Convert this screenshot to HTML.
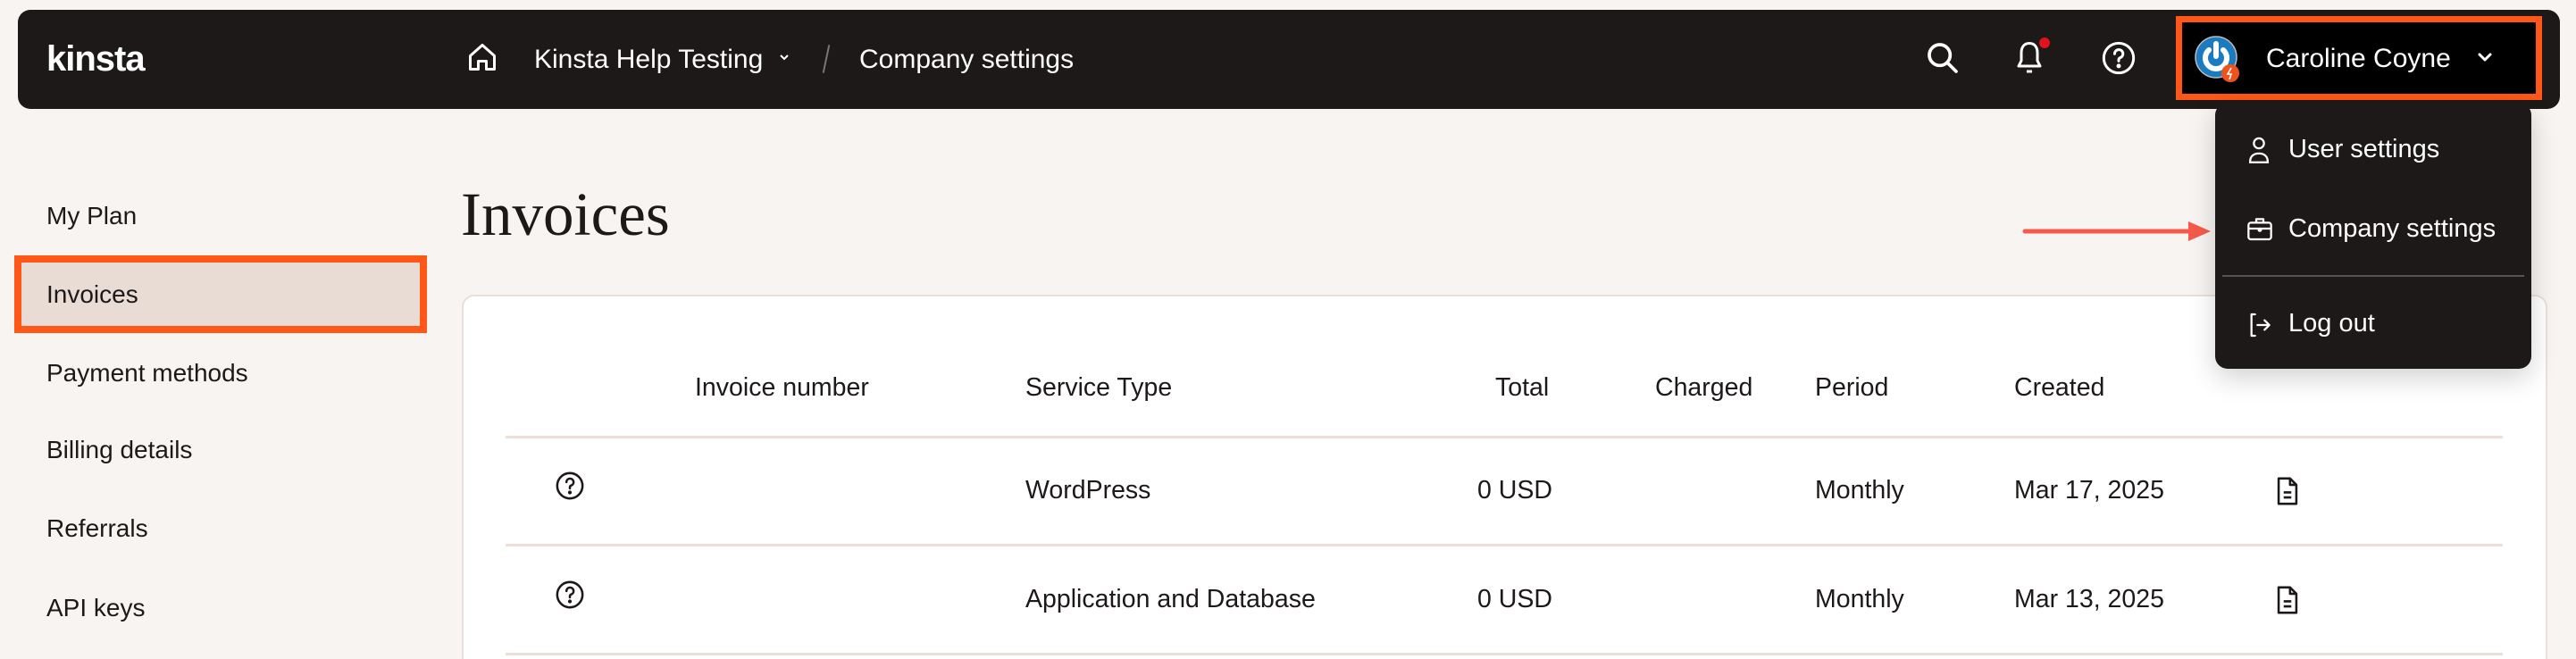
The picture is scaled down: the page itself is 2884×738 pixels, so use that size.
<!DOCTYPE html>
<html style="overflow:hidden;height:738px"><head><meta charset="utf-8"><style>
*{margin:0;padding:0;box-sizing:border-box}
body{width:2884px;height:738px;background:#f7f4f1;font-family:"Liberation Sans",sans-serif;color:#1d1918;position:relative;overflow:hidden}
.a{position:absolute;white-space:nowrap}
.nav{left:20px;top:11px;width:2846px;height:111px;background:#1d1918;border-radius:14px}
.w{color:#fff}
.t{font-size:28.5px;line-height:1}
.side{font-size:28px;left:52px;line-height:1}
.hr{position:absolute;left:566px;width:2236px;height:3px;background:#ecdfd8}
.dd{font-size:29px;color:#fff;line-height:1}
</style></head><body>
<div class="a nav"></div>
<div class="a w" style="left:52px;top:44px;font-size:40px;font-weight:bold;letter-spacing:-1px">kinsta</div>
<svg class="a" style="left:522px;top:46px" width="36" height="36" viewBox="0 0 24 24" fill="none" stroke="#fff" stroke-width="2" stroke-linejoin="round"><path d="M3 11 12 3l9 8v10h-6v-6h-6v6H3z"/></svg>
<div class="a w" style="left:598px;top:50px;font-size:30px">Kinsta Help Testing</div>
<svg class="a" style="left:870px;top:58px" width="16" height="12" viewBox="0 0 16 12" fill="none" stroke="#fff" stroke-width="2"><path d="M4 4l4 4 4-4"/></svg>
<div class="a" style="left:924px;top:50px;width:2px;height:32px;background:#777;transform:rotate(12deg)"></div>
<div class="a w" style="left:962px;top:50px;font-size:30px">Company settings</div>
<svg class="a" style="left:2155px;top:45px" width="40" height="40" viewBox="0 0 24 24" fill="none" stroke="#fff" stroke-width="2.2" stroke-linecap="round"><circle cx="10" cy="10" r="7"/><path d="M15.5 15.5 21 21"/></svg>
<svg class="a" style="left:2254px;top:44px" width="36" height="42" viewBox="0 0 24 28" fill="none" stroke="#fff" stroke-width="2" stroke-linejoin="round"><path d="M12 3c-4 0-6 3-6 7v6l-2 4h16l-2-4v-6c0-4-2-7-6-7z"/><path d="M10 24h4"/></svg>
<div class="a" style="left:2283px;top:42px;width:12px;height:12px;border-radius:50%;background:#e0121b"></div>
<svg class="a" style="left:2352px;top:45px" width="40" height="40" viewBox="0 0 24 24" fill="none" stroke="#fff" stroke-width="1.8" stroke-linecap="round"><circle cx="12" cy="12" r="10"/><path d="M9.3 9.2a2.8 2.8 0 1 1 3.7 2.6c-.7.3-1 .8-1 1.5v.7"/><circle cx="12" cy="17.3" r=".6" fill="#fff"/></svg>
<div class="a" style="left:2436px;top:18px;width:410px;height:94px;background:#000;border:7px solid #ff5717"></div>
<svg class="a" style="left:2456px;top:39px" width="54" height="56" viewBox="0 0 54 56"><circle cx="25" cy="25" r="23" fill="#1a7bc0" stroke="#bbb" stroke-width="1.5"/><path d="M17 17a12 12 0 1 0 16 0" fill="none" stroke="#fff" stroke-width="6" stroke-linecap="round"/><path d="M25 10v14" stroke="#fff" stroke-width="6" stroke-linecap="round"/><circle cx="41" cy="43" r="10" fill="#f0521e"/><path d="M42 37l-4 7h4l-2 6" fill="none" stroke="#fff" stroke-width="1.6"/></svg>
<div class="a w" style="left:2537px;top:49px;font-size:30px">Caroline Coyne</div>
<svg class="a" style="left:2770px;top:55px" width="24" height="20" viewBox="0 0 24 20" fill="none" stroke="#fff" stroke-width="3" stroke-linecap="round" stroke-linejoin="round"><path d="M6 6l6 6 6-6"/></svg>

<div class="a side" style="top:228px">My Plan</div>
<div class="a" style="left:16px;top:286px;width:462px;height:87px;background:#e9dcd5;border:8px solid #ff5717"></div>
<div class="a side" style="top:316px">Invoices</div>
<div class="a side" style="top:404px">Payment methods</div>
<div class="a side" style="top:490px">Billing details</div>
<div class="a side" style="top:578px">Referrals</div>
<div class="a side" style="top:667px">API keys</div>

<div class="a" style="left:516px;top:201px;font-family:'Liberation Serif',serif;font-size:69px">Invoices</div>
<div class="a" style="left:517px;top:330px;width:2335px;height:408px;background:#fff;border:2px solid #ebe0d9;border-bottom:none;border-radius:14px 14px 0 0"></div>

<div class="a t" style="left:778px;top:420px">Invoice number</div>
<div class="a t" style="left:1148px;top:420px">Service Type</div>
<div class="a t" style="left:1674px;top:420px">Total</div>
<div class="a t" style="left:1853px;top:420px">Charged</div>
<div class="a t" style="left:2032px;top:420px">Period</div>
<div class="a t" style="left:2255px;top:420px">Created</div>
<div class="hr" style="top:488px"></div>
<div class="hr" style="top:609px"></div>
<div class="hr" style="top:731px"></div>

<svg class="a" style="left:621px;top:527px" width="34" height="34" viewBox="0 0 24 24" fill="none" stroke="#1d1918" stroke-width="1.8" stroke-linecap="round"><circle cx="12" cy="12" r="10"/><path d="M9.3 9.2a2.8 2.8 0 1 1 3.7 2.6c-.7.3-1 .8-1 1.5v.7"/><circle cx="12" cy="17.3" r=".6" fill="#1d1918"/></svg>
<div class="a t" style="left:1148px;top:535px">WordPress</div>
<div class="a t" style="left:1654px;top:535px">0 USD</div>
<div class="a t" style="left:2032px;top:535px">Monthly</div>
<div class="a t" style="left:2255px;top:535px">Mar 17, 2025</div>
<svg class="a" style="left:2546px;top:533px" width="30" height="34" viewBox="0 0 20 24" fill="none" stroke="#1d1918" stroke-width="1.8" stroke-linejoin="round"><path d="M3 2h9l5 5v15H3z"/><path d="M12 2v5h5M7 13h6M7 17h6"/></svg>

<svg class="a" style="left:621px;top:649px" width="34" height="34" viewBox="0 0 24 24" fill="none" stroke="#1d1918" stroke-width="1.8" stroke-linecap="round"><circle cx="12" cy="12" r="10"/><path d="M9.3 9.2a2.8 2.8 0 1 1 3.7 2.6c-.7.3-1 .8-1 1.5v.7"/><circle cx="12" cy="17.3" r=".6" fill="#1d1918"/></svg>
<div class="a t" style="left:1148px;top:657px">Application and Database</div>
<div class="a t" style="left:1654px;top:657px">0 USD</div>
<div class="a t" style="left:2032px;top:657px">Monthly</div>
<div class="a t" style="left:2255px;top:657px">Mar 13, 2025</div>
<svg class="a" style="left:2546px;top:655px" width="30" height="34" viewBox="0 0 20 24" fill="none" stroke="#1d1918" stroke-width="1.8" stroke-linejoin="round"><path d="M3 2h9l5 5v15H3z"/><path d="M12 2v5h5M7 13h6M7 17h6"/></svg>

<svg class="a" style="left:2264px;top:246px" width="214" height="26" viewBox="0 0 214 26"><path d="M3 13H190" stroke="#f55a4a" stroke-width="5" stroke-linecap="round"/><path d="M186 2l25 11-25 11z" fill="#f55a4a"/></svg>

<div class="a" style="left:2480px;top:115px;width:354px;height:298px;background:#1d1918;border-radius:14px;box-shadow:0 10px 30px rgba(0,0,0,.18)"></div>
<svg class="a" style="left:2514px;top:152px" width="30" height="34" viewBox="0 0 20 24" fill="none" stroke="#fff" stroke-width="1.6"><circle cx="10" cy="6" r="4"/><path d="M3 21c0-5 3-7 7-7s7 2 7 7z"/></svg>
<div class="a dd" style="left:2562px;top:153px">User settings</div>
<svg class="a" style="left:2514px;top:240px" width="32" height="32" viewBox="0 0 24 24" fill="none" stroke="#fff" stroke-width="1.7" stroke-linejoin="round"><rect x="2.5" y="7" width="19" height="14" rx="2"/><path d="M9 7V4h6v3M2.5 12h19"/><circle cx="12" cy="13" r="1" fill="#fff"/></svg>
<div class="a dd" style="left:2562px;top:242px">Company settings</div>
<div class="a" style="left:2488px;top:308px;width:338px;height:2px;background:#555"></div>
<svg class="a" style="left:2514px;top:348px" width="32" height="32" viewBox="0 0 24 24" fill="none" stroke="#fff" stroke-width="1.7" stroke-linecap="round" stroke-linejoin="round"><path d="M8 3H5v18h3"/><path d="M10 12h10M16 8l4 4-4 4"/></svg>
<div class="a dd" style="left:2562px;top:348px">Log out</div>
</body></html>
